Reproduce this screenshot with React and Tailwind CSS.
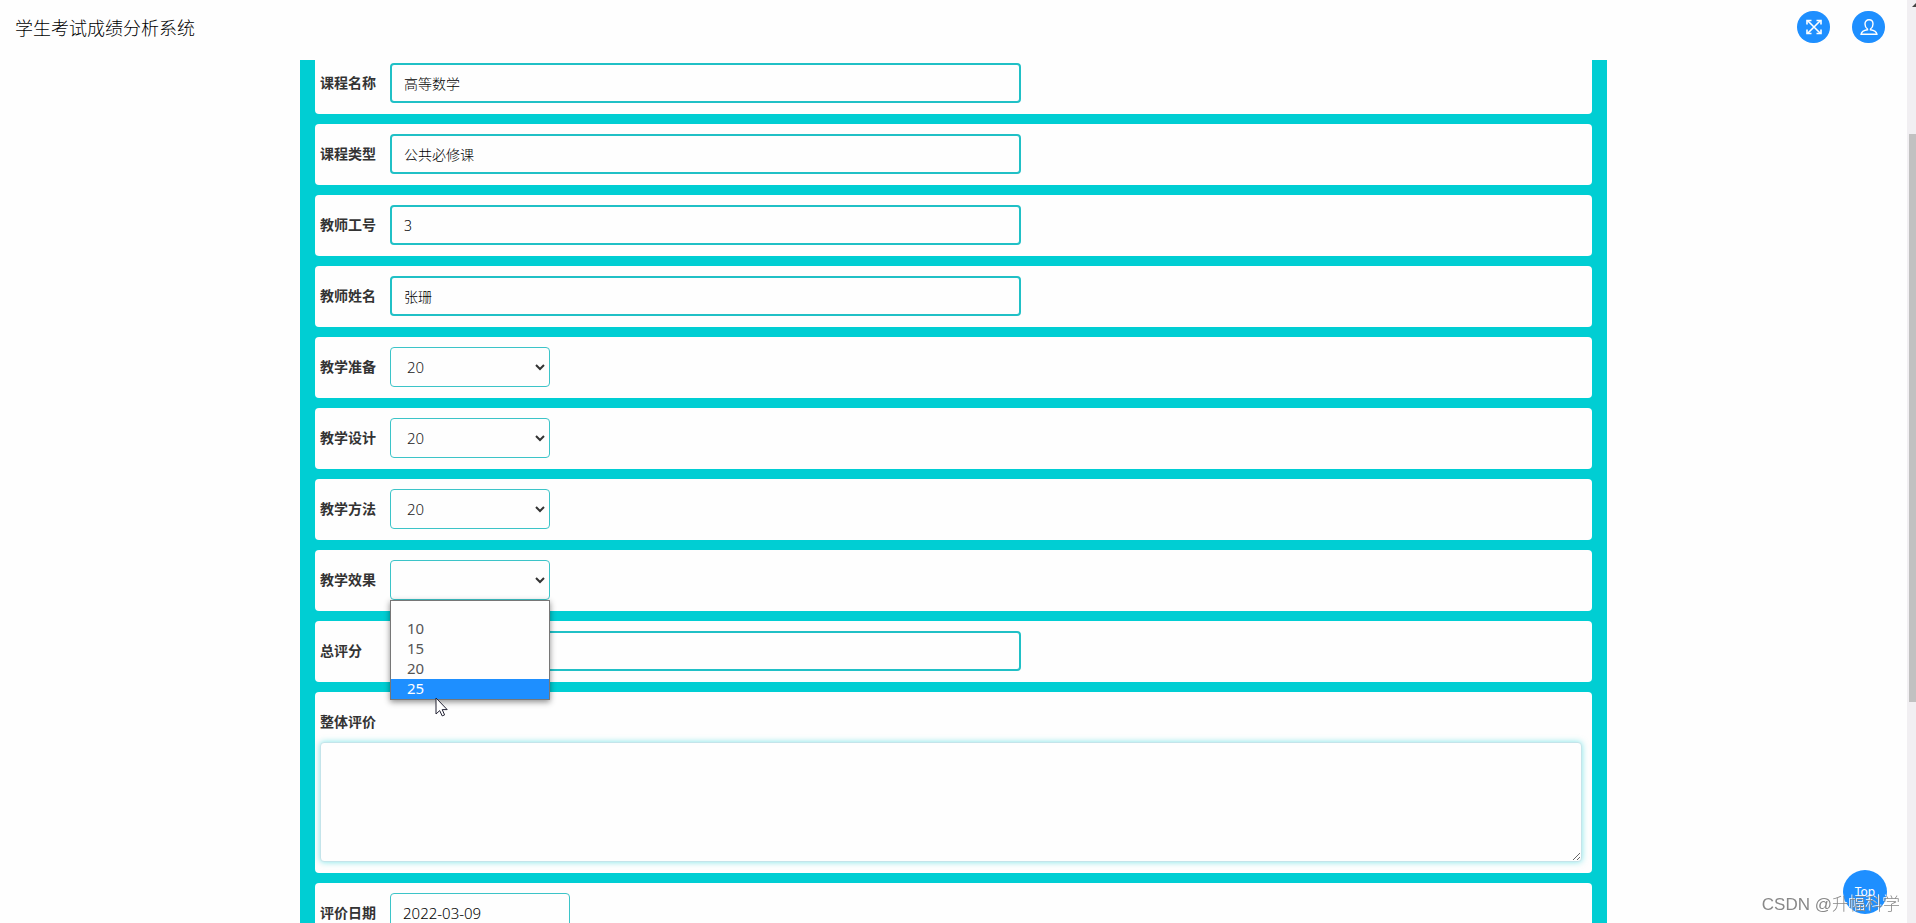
import { useState } from 'react';

const courseFields = [
  { id: 'kechengmingcheng', label: '课程名称', value: '高等数学' },
  { id: 'kechengleixing', label: '课程类型', value: '公共必修课' },
  { id: 'jiaoshigonghao', label: '教师工号', value: '3' },
  { id: 'jiaoshixingming', label: '教师姓名', value: '张珊' },
];

const scoreFields = [
  { id: 'jiaoxuezhunbei', label: '教学准备', value: '20' },
  { id: 'jiaoxuesheji', label: '教学设计', value: '20' },
  { id: 'jiaoxuefangfa', label: '教学方法', value: '20' },
  { id: 'jiaoxuexiaoguo', label: '教学效果', value: '', open: true },
];

const scores = ['', '10', '15', '20', '25'];

const FormRow = ({ id, label, children }) => (
  <div className="flex items-center rounded bg-[#fefefe] pt-2.5 pb-[11px] pl-[5px]">
    <label htmlFor={id} className="w-[70px] shrink-0 text-sm font-bold">
      {label}
    </label>
    {children}
  </div>
);

const TextField = ({ id, label, value: initial }) => {
  const [value, setValue] = useState(initial);

  return (
    <FormRow id={id} label={label}>
      <input
        id={id}
        type="text"
        value={value}
        onChange={(e) => setValue(e.target.value)}
        className="h-10 w-[631px] max-w-full rounded border-2 border-[#20c0c6] bg-[#fefefe] px-3 text-sm font-light text-black outline-none"
      />
    </FormRow>
  );
};

const ScoreField = ({ id, label, value: initial, open: initialOpen }) => {
  const [value, setValue] = useState(initial);
  const [open, setOpen] = useState(initialOpen);
  const [active, setActive] = useState('25');

  const pick = (score) => {
    setValue(score);
    setOpen(false);
  };

  return (
    <FormRow id={id} label={label}>
      <div className="relative w-40">
        <select
          id={id}
          value={value}
          onChange={(e) => setValue(e.target.value)}
          className="block h-10 w-full appearance-none rounded border border-[#3cc4c8] bg-[#fefefe] px-4 text-[15px] font-light text-[#222] outline-none"
        >
          {scores.map((score) => (
            <option key={score} value={score}>{score}</option>
          ))}
        </select>
        <svg
          className="pointer-events-none absolute top-4 right-1 h-2 w-3"
          viewBox="0 0 12 8"
          fill="none"
          stroke="#333"
          strokeWidth="2"
        >
          <path d="M2 2l4 4 4-4" />
        </svg>
        {open && (
          <>
            <ul className="absolute top-full left-0 z-10 w-full border border-[#777] bg-[#fefefe] text-[15px] leading-[18px] text-[#555] shadow-[0_2px_6px_rgba(0,0,0,0.45)]">
              {scores.map((score) => (
                <li
                  key={score}
                  onMouseEnter={() => setActive(score)}
                  onClick={() => pick(score)}
                  className={`h-5 px-4 first:h-[18px] ${score === active ? 'bg-[#1e8fff] text-white' : ''}`}
                >
                  {score}
                </li>
              ))}
            </ul>
            <svg className="pointer-events-none absolute top-[137px] left-[45px] z-20 h-5 w-3.5" viewBox="0 0 14 20">
              <path
                d="M1 1v16l3.700-3.400 2.500 5.300 2.400-1-2.400-5.300h5z"
                fill="#fff"
                stroke="#223"
              />
            </svg>
          </>
        )}
      </div>
    </FormRow>
  );
};

const Header = () => (
  <header className="flex h-[60px] shrink-0 items-start justify-between pt-[11px] pr-[22px] pl-[15px]">
    <h1 className="pt-px text-lg leading-8 font-light text-black">学生考试成绩分析系统</h1>
    <div className="flex gap-[22px]">
      <button aria-label="全屏" className="flex h-8 w-[33px] items-center justify-center rounded-full bg-[#1e8fff]">
        <svg className="size-4" viewBox="0 0 16 16" fill="none" stroke="#fff" strokeWidth="1.6">
          <path d="M1.500 1.500l13 13M14.500 1.500l-13 13" />
          <path d="M1 5.500V1.500h4.500M10.500 1.500H15v4M15 10.500v4h-4.500M5.500 14.500H1v-4" />
        </svg>
      </button>
      <button aria-label="个人中心" className="flex h-8 w-[33px] items-center justify-center rounded-full bg-[#1e8fff]">
        <svg className="h-4 w-[18px]" viewBox="0 0 18 16" fill="none" stroke="#fff" strokeWidth="1.4">
          <path d="M7.500 10C5.800 8.800 5 6.900 5 4.900 5 2.400 6.600.8 9 .8s4 1.600 4 4.100c0 2-.8 3.900-2.500 5.100v.8c3.900.6 6 1.900 6.400 4.400H1.100c.4-2.500 2.500-3.800 6.400-4.400z" />
        </svg>
      </button>
    </div>
  </header>
);

const ScrollTrack = () => (
  <div className="relative w-[9px] shrink-0 bg-[#f1eff2] pt-[134px] pl-0.5">
    <svg className="absolute top-[3px] right-0 h-1 w-1" viewBox="0 0 4 4">
      <path d="M0 4L4 0v4z" fill="#444" />
    </svg>
    <div className="h-[72%] bg-[#c1c1c1]" />
  </div>
);

const App = () => {
  const [comment, setComment] = useState('');
  const [date, setDate] = useState('2022-03-09');

  return (
    <div className="flex h-screen overflow-hidden bg-[#fefefe] font-['Noto_Sans','Noto_Sans_CJK_SC',sans-serif] text-[#333]">
      <div className="flex min-w-0 flex-1 flex-col">
        <Header />
        <main className="min-h-0 flex-1 overflow-hidden px-[300px]">
          <form className="-mt-[7px] flex flex-col gap-2.5 bg-[#00ced3] px-[15px]">
            {courseFields.map((field) => (
              <TextField key={field.id} {...field} />
            ))}
            {scoreFields.map((field) => (
              <ScoreField key={field.id} {...field} />
            ))}
            <TextField id="zongpingfen" label="总评分" value="" />

            <div className="rounded bg-[#fefefe] pt-5 pr-2.5 pb-[11px] pl-[5px]">
              <label htmlFor="zhengtipingjia" className="block pb-2.5 text-sm font-bold">
                整体评价
              </label>
              <textarea
                id="zhengtipingjia"
                value={comment}
                onChange={(e) => setComment(e.target.value)}
                className="block h-[120px] w-full rounded border border-[#c4e4ea] bg-[#fefefe] p-3 text-sm shadow-[0_0_6px_rgba(0,206,211,0.5)] outline-none"
              />
            </div>

            <FormRow id="pingjiariqi" label="评价日期">
              <input
                id="pingjiariqi"
                type="text"
                value={date}
                onChange={(e) => setDate(e.target.value)}
                className="h-10 w-[180px] rounded border border-[#3cc4c8] bg-[#fefefe] px-3 text-[15px] font-light text-black outline-none"
              />
            </FormRow>
          </form>
        </main>
      </div>
      <ScrollTrack />

      <button className="fixed right-[29px] bottom-[9px] size-11 rounded-full bg-[#1e8fff] text-xs text-white">
        Top
      </button>
      <p className="pointer-events-none fixed right-4 bottom-1.5 font-['Liberation_Sans','Noto_Sans_CJK_SC',sans-serif] text-[17px] font-light text-[#888] [text-shadow:-1px_-1px_0_#fff]">
        CSDN @升幅科学
      </p>
    </div>
  );
};

export default App;
